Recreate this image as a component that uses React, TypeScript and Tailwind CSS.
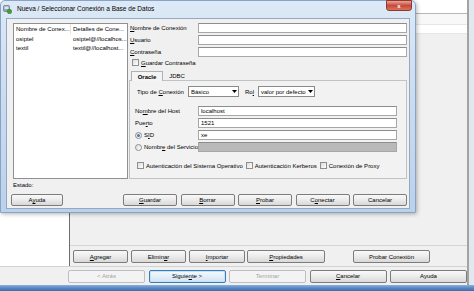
import React from "react";

const FONT = "font-['Liberation_Sans',Arial,sans-serif]";

function Mn({ text, at }: { text: string; at?: number }) {
  if (at === undefined) return <>{text}</>;
  return (
    <>
      {text.slice(0, at)}
      <span className="underline underline-offset-[1px] decoration-[0.5px]">{text[at]}</span>
      {text.slice(at + 1)}
    </>
  );
}

interface BtnProps {
  label: string;
  at?: number;
  w: string;
  h?: string;
  disabled?: boolean;
  focused?: boolean;
}

const Btn: React.FC<BtnProps> = ({ label, at, w, h = "h-[12px]", disabled, focused }) => {
  let tone =
    "border-[#7c7c7c] bg-linear-to-b from-[#f9f9f9] via-[#ebebeb] to-[#d8d8d8] text-black";
  if (disabled) tone = "border-[#bcc0c4] bg-[#f3f3f3] text-[#a3a3a3]";
  if (focused)
    tone =
      "border-[#3c7ab3] bg-linear-to-b from-[#f4f9fd] via-[#e4eff9] to-[#cfe2f3] text-black shadow-[inset_0_0_0_1px_#c4e2f8]";
  return (
    <div
      className={`${w} ${h} ${tone} shrink-0 flex items-center justify-center rounded-[2px] border text-[6px] leading-none whitespace-nowrap`}
    >
      <span>
        <Mn text={label} at={at} />
      </span>
    </div>
  );
};

const Field: React.FC<{ value?: string; gray?: boolean; className?: string }> = ({
  value,
  gray,
  className = "flex-1",
}) => (
  <div
    className={`${className} h-[10px] border border-[#a7a7a7] border-t-[#8d8d8d] ${
      gray ? "bg-[#b9b9b9]" : "bg-white"
    } flex items-center px-[2px] text-[6px] leading-none`}
  >
    {value}
  </div>
);

const Check: React.FC<{ label: string; at?: number }> = ({ label, at }) => (
  <div className="flex items-center gap-[2px] text-[6px] leading-none whitespace-nowrap">
    <span className="w-[7px] h-[7px] border border-[#8e8f8f] bg-linear-to-br from-[#dcdcdc] to-white shrink-0" />
    <span>
      <Mn text={label} at={at} />
    </span>
  </div>
);

const Radio: React.FC<{ label: string; at?: number; checked?: boolean }> = ({
  label,
  at,
  checked,
}) => (
  <div className="flex items-center gap-[2px] text-[6px] leading-none whitespace-nowrap">
    <span className="w-[7px] h-[7px] rounded-full border border-[#8e8f8f] bg-linear-to-br from-[#dcdcdc] to-white flex items-center justify-center shrink-0">
      {checked && <span className="w-[3px] h-[3px] rounded-full bg-[#4a78b8]" />}
    </span>
    <span>
      <Mn text={label} at={at} />
    </span>
  </div>
);

const Select: React.FC<{ value: string; w: string }> = ({ value, w }) => (
  <div
    className={`${w} h-[11px] border border-[#8a8a8a] bg-white flex items-center justify-between pl-[2px] pr-[1px] text-[6px] leading-none whitespace-nowrap`}
  >
    <span>{value}</span>
    <svg width="5" height="3" viewBox="0 0 5 3">
      <path d="M0 0h5L2.5 3z" fill="#000" />
    </svg>
  </div>
);

const FormRow: React.FC<{ label: React.ReactNode; children: React.ReactNode; labelW: string }> = ({
  label,
  children,
  labelW,
}) => (
  <div className="flex items-center h-[10px]">
    <div className={`${labelW} shrink-0 text-[6px] leading-none whitespace-nowrap`}>{label}</div>
    {children}
  </div>
);

const Dialog: React.FC = () => (
  <div className="absolute left-0 top-0 w-[416px] h-[213px] rounded-t-[5px] border border-[#87a3c6] bg-linear-to-b from-[#dde9f6] via-[#c9dbef] to-[#bcd1ea] flex flex-col shadow-[1px_1px_4px_rgba(0,0,0,0.3)]">
    {/* title bar */}
    <div className="relative h-[17px] shrink-0 flex items-center pl-[2px] gap-[5px]">
      <svg width="9" height="9" viewBox="0 0 9 9">
        <rect x="0.5" y="0.5" width="6" height="6" rx="1" fill="#8fa3b4" stroke="#5b6b78" strokeWidth="0.6" />
        <rect x="1.5" y="1.5" width="4" height="2.5" fill="#d9e6ef" />
        <circle cx="6.5" cy="6.5" r="2.2" fill="#3fa33a" stroke="#24701f" strokeWidth="0.5" />
      </svg>
      <span className="text-[6.5px] leading-none text-black whitespace-nowrap">
        Nueva / Seleccionar Conexión a Base de Datos
      </span>
      <div className="absolute right-[3px] top-[-1px] w-[26px] h-[11px] rounded-b-[3px] border border-[#8a3a30] bg-linear-to-b from-[#e9a597] via-[#c9483b] to-[#d97358] flex items-center justify-center">
        <span className="text-white text-[6px] font-bold leading-none">x</span>
      </div>
    </div>

    {/* client area */}
    <div className="flex-1 mx-[5px] mb-[3px] border border-[#93a9c3] bg-[#f0f0f0] flex flex-col pl-[6px] pr-[2px] pt-[4px] pb-[2px]">
      <div className="flex h-[156px] shrink-0 gap-[1px]">
        {/* connection list */}
        <div className="w-[115px] border border-[#8d9096] bg-white flex flex-col text-[6px] leading-none whitespace-nowrap">
          <div className="flex h-[10px] items-center">
            <div className="w-[57px] pl-[2px] border-r border-[#e2e2e2] h-full flex items-center">
              Nombre de Conex...
            </div>
            <div className="flex-1 pl-[2px]">Detalles de Cone...</div>
          </div>
          <div className="flex h-[9px] items-center">
            <div className="w-[57px] pl-[2px]">osiptel</div>
            <div className="flex-1 pl-[2px]">osiptel@//localhos...</div>
          </div>
          <div className="flex h-[9px] items-center">
            <div className="w-[57px] pl-[2px]">textil</div>
            <div className="flex-1 pl-[2px]">textil@//localhost...</div>
          </div>
        </div>

        {/* form */}
        <div className="flex-1 flex flex-col">
          <div className="flex flex-col gap-[2px]">
            <FormRow labelW="w-[69px] pl-[1px]" label={<Mn text="Nombre de Conexión" at={0} />}>
              <Field />
            </FormRow>
            <FormRow labelW="w-[69px] pl-[1px]" label={<Mn text="Usuario" at={0} />}>
              <Field />
            </FormRow>
            <FormRow labelW="w-[69px] pl-[1px]" label={<Mn text="Contraseña" at={0} />}>
              <Field />
            </FormRow>
          </div>
          <div className="mt-[2px] h-[7px] pl-[3px] flex items-center">
            <Check label="Guardar Contraseña" at={0} />
          </div>

          {/* tabs */}
          <div className="mt-[5px] h-[9px] flex items-end pl-[2px] text-[6px] leading-none">
            <div className="relative z-10 -mb-px w-[32px] h-[10px] border border-b-0 border-[#aeb1b5] bg-[#f4f4f4] rounded-t-[1px] flex items-center justify-center font-bold">
              Oracle
            </div>
            <div className="w-[28px] h-[9px] flex items-center justify-center">JDBC</div>
          </div>
          <div className="h-[99px] border border-[#c0c2c5] bg-[#f2f2f2] flex flex-col">
            <div className="mt-[5px] pl-[7px] flex items-center h-[11px] text-[6px] leading-none whitespace-nowrap">
              <div className="w-[51px]">
                <Mn text="Tipo de Conexión" at={8} />
              </div>
              <Select value="Básico" w="w-[51px]" />
              <div className="ml-[6px] w-[13px]">
                <Mn text="Rol" at={2} />
              </div>
              <Select value="valor por defecto" w="w-[57px]" />
            </div>

            <div className="mt-[9px] pl-[5px] pr-[9px] flex flex-col gap-[2px]">
              <FormRow labelW="w-[63px]" label={<Mn text="Nombre del Host" at={2} />}>
                <Field value="localhost" />
              </FormRow>
              <FormRow labelW="w-[63px]" label={<Mn text="Puerto" at={3} />}>
                <Field value="1521" />
              </FormRow>
              <FormRow labelW="w-[63px]" label={<Radio label="SID" at={1} checked />}>
                <Field value="xe" />
              </FormRow>
              <FormRow labelW="w-[63px]" label={<Radio label="Nombre del Servicio" at={5} />}>
                <Field gray />
              </FormRow>
            </div>

            <div className="mt-[10px] pl-[7px] flex items-center gap-[3px] h-[7px]">
              <Check label="Autenticación del Sistema Operativo" />
              <Check label="Autenticación Kerberos" />
              <Check label="Conexión de Proxy" />
            </div>
          </div>
        </div>
      </div>

      <div className="h-[12px] shrink-0 flex items-center text-[6px] leading-none">Estado:</div>

      <div className="mt-[3px] -ml-[2px] flex items-center justify-between">
        <Btn label="Ayuda" at={1} w="w-[52px]" />
        <div className="flex gap-[3.5px]">
          <Btn label="Guardar" at={0} w="w-[54px]" />
          <Btn label="Borrar" at={0} w="w-[54px]" />
          <Btn label="Probar" at={0} w="w-[54px]" />
          <Btn label="Conectar" at={1} w="w-[54px]" />
          <Btn label="Cancelar" w="w-[54px]" />
        </div>
      </div>
    </div>
  </div>
);

const App: React.FC = () => {
  return (
    <div className={`relative w-[474px] h-[291px] overflow-hidden bg-[#f0f0f0] text-black ${FONT}`}>
      <div className="flex flex-col h-full">
        <div className="flex flex-1">
          <div className="flex flex-col flex-1">
            <div className="flex flex-1">
              <div className="w-[70px] bg-white border-r border-[#6e6e6e]" />
              <div className="flex-1 flex flex-col">
                <div className="h-[14px] bg-white border-b border-[#b5b5b5]" />
                <div className="h-[11px] bg-[#f8f8f8] border-b border-[#e6e6e6]" />
                <div className="h-[9px] bg-white border-b border-[#e6e6e6]" />
                <div className="flex-1 border-b border-[#d5d5d5]" />
                <div className="h-[20px] pt-[4px] pl-[3px] flex items-start gap-[3px]">
                  <Btn label="Agregar" at={0} w="w-[55px]" h="h-[13px]" />
                  <Btn label="Eliminar" at={6} w="w-[55px]" h="h-[13px]" />
                  <Btn label="Importar" at={0} w="w-[56px]" h="h-[13px]" />
                  <div className="-ml-[1px]">
                    <Btn label="Propiedades" at={0} w="w-[78px]" h="h-[13px]" />
                  </div>
                  <div className="ml-[25px]">
                    <Btn label="Probar Conexión" w="w-[77px]" h="h-[13px]" />
                  </div>
                </div>
              </div>
            </div>
            <div className="h-[19px] border-t border-[#d3d3d3] flex items-center gap-[3.5px] pl-[68px]">
              <Btn label="< Atrás" w="w-[77px]" h="h-[13px]" disabled />
              <Btn label="Siguiente >" at={6} w="w-[77px]" h="h-[13px]" focused />
              <Btn label="Terminar" w="w-[77px]" h="h-[13px]" disabled />
              <Btn label="Cancelar" at={0} w="w-[77px]" h="h-[13px]" />
              <Btn label="Ayuda" w="w-[77px]" h="h-[13px]" />
            </div>
          </div>
          <div className="w-[7px] border-l-2 border-[#a3a3a3] bg-[#e1e8f0]" />
        </div>
        <div className="h-[6px] bg-linear-to-b from-[#8bb0dc] via-[#5b88c4] to-[#3c6cab]" />
      </div>
      <Dialog />
    </div>
  );
};

export default App;
